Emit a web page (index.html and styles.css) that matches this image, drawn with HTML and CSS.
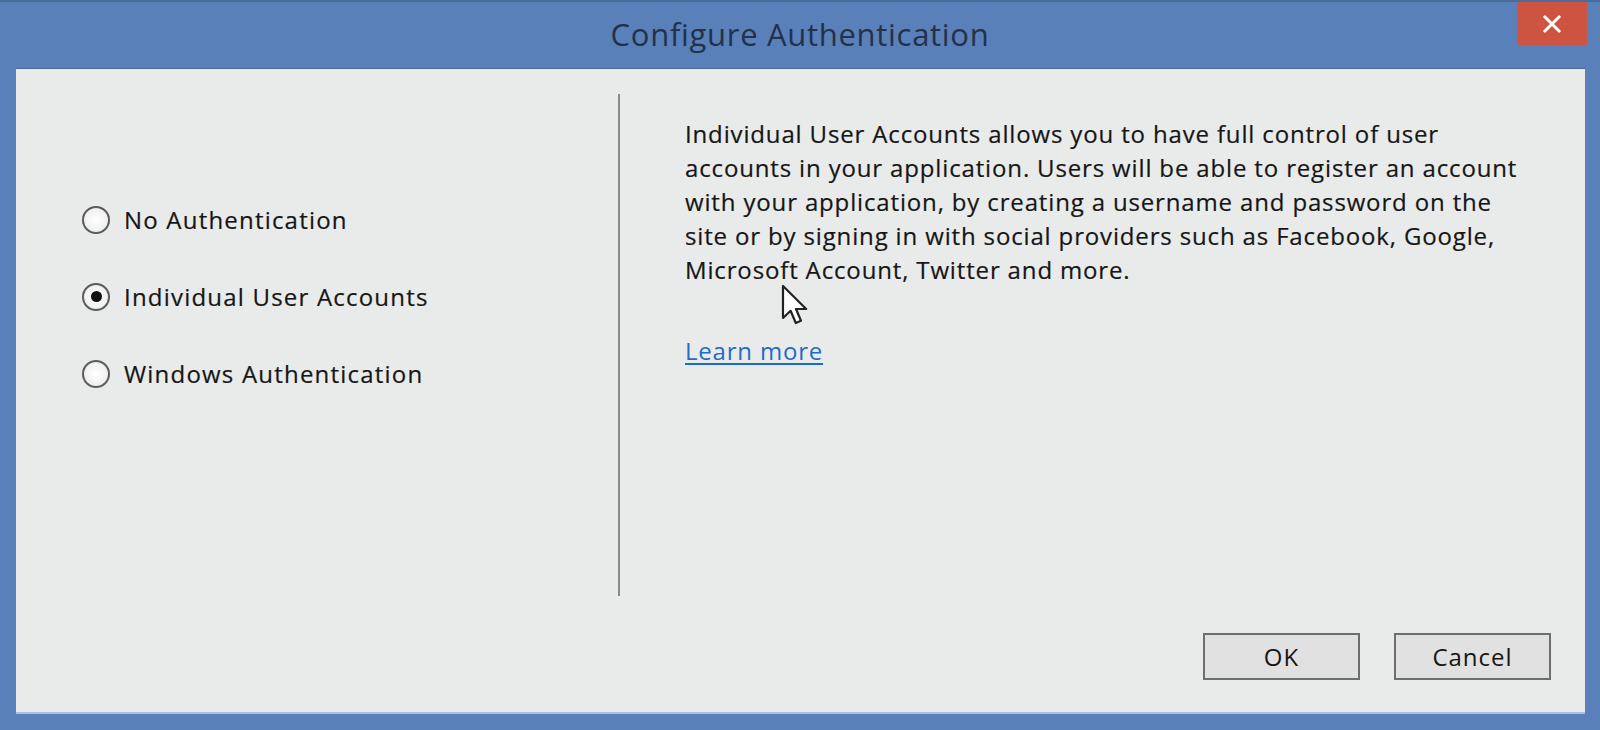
FILE: index.html
```html
<!DOCTYPE html>
<html lang="en">
<head>
<meta charset="utf-8">
<title>Configure Authentication</title>
<link rel="stylesheet" href="styles.css">
</head>
<body>
<div class="window">
  <div class="titlebar">
    <div class="title">Configure Authentication</div>
    <button class="close" aria-label="Close">
      <svg width="20" height="20" viewBox="0 0 20 20"><path d="M3 3 L17 17 M17 3 L3 17" stroke="#fff" stroke-width="3" stroke-linecap="square"/></svg>
    </button>
  </div>
  <div class="panel">
    <div class="main">
      <div class="options">
        <label class="option"><span class="radio"></span><span>No Authentication</span></label>
        <label class="option"><span class="radio checked"></span><span>Individual User Accounts</span></label>
        <label class="option"><span class="radio"></span><span>Windows Authentication</span></label>
      </div>
      <div class="divider"></div>
      <div class="info">
        <p class="desc">Individual User Accounts allows you to have full control of user<br>accounts in your application. Users will be able to register an account<br>with your application, by creating a username and password on the<br>site or by signing in with social providers such as Facebook, Google,<br>Microsoft Account, Twitter and more.</p>
        <a class="learn" href="#">Learn more</a>
      </div>
    </div>
    <div class="footer">
      <button class="btn">OK</button>
      <button class="btn">Cancel</button>
    </div>
    <svg class="cursor" width="30" height="44" viewBox="0 0 15 22"><path d="M1 1 L1 17 L4.8 13.4 L7.4 19.5 L10 18.4 L7.5 12.5 L12.6 12.5 Z" fill="#fff" stroke="#222" stroke-width="1.1" stroke-linejoin="round"/></svg>
  </div>
</div>
</body>
</html>
```

FILE: styles.css
```css
html, body {
  margin: 0;
  padding: 0;
}
body {
  width: 1600px;
  height: 730px;
  background: #5a80b9;
  font-family: "Open Sans", "Noto Sans", "Liberation Sans", sans-serif;
  overflow: hidden;
}
.window {
  display: flex;
  flex-direction: column;
  height: 730px;
  border-top: 2px solid #4a6c9c;
  box-sizing: border-box;
}
.titlebar {
  position: relative;
  height: 66px;
  display: flex;
  align-items: center;
  justify-content: center;
}
.title {
  font-size: 31px;
  color: #22324a;
  margin-top: -2px;
  letter-spacing: 0.7px;
}
.close {
  position: absolute;
  top: 0;
  right: 13px;
  width: 70px;
  height: 43px;
  border: 0;
  padding: 0;
  background: #cc5441;
  display: flex;
  align-items: center;
  justify-content: center;
}
.panel {
  position: relative;
  margin: 0 15px 16px 16px;
  flex: 1;
  background: #e9ebea;
  border-top: 1px solid #4a6a9a;
  border-bottom: 2px solid #a9c1e0;
  display: flex;
  flex-direction: column;
}
.main {
  display: flex;
  height: 502px;
  margin-top: 25px;
}
.options {
  width: 536px;
  padding-left: 66px;
  padding-top: 112px;
  display: flex;
  flex-direction: column;
  gap: 50px;
}
.option {
  display: flex;
  align-items: center;
  gap: 14px;
  font-size: 24px;
  color: #161616;
  height: 27px;
  letter-spacing: 1.2px;
  -webkit-text-stroke: 0.2px #161616;
}
.radio {
  width: 24px;
  height: 24px;
  border-radius: 50%;
  border: 2px solid #5c5c5c;
  background: radial-gradient(circle, #ffffff 0%, #f2f2f2 60%, #dcdcdc 100%);
  display: flex;
  align-items: center;
  justify-content: center;
  flex: none;
}
.radio.checked::after {
  content: "";
  width: 11px;
  height: 11px;
  border-radius: 50%;
  background: #111;
}
.divider {
  width: 2px;
  background: #8a8a8a;
}
.info {
  padding-left: 65px;
  padding-top: 23px;
}
.desc {
  margin: 0;
  font-size: 24px;
  line-height: 34px;
  color: #161616;
  letter-spacing: 0.85px;
  -webkit-text-stroke: 0.2px #161616;
}
.learn {
  display: inline-block;
  margin-top: 47px;
  font-size: 24px;
  color: #1e6cc7;
  text-decoration: underline;
  text-underline-offset: 3px;
  letter-spacing: 0.8px;
}
.footer {
  display: flex;
  justify-content: flex-end;
  gap: 34px;
  padding-right: 34px;
  margin-top: 37px;
}
.btn {
  width: 157px;
  height: 47px;
  border: 2px solid #6e6e6e;
  background: #e1e1e1;
  font-family: inherit;
  font-size: 24px;
  letter-spacing: 1px;
  color: #161616;
  padding: 0;
}
.cursor {
  position: absolute;
  left: 765px;
  top: 215px;
}
```
